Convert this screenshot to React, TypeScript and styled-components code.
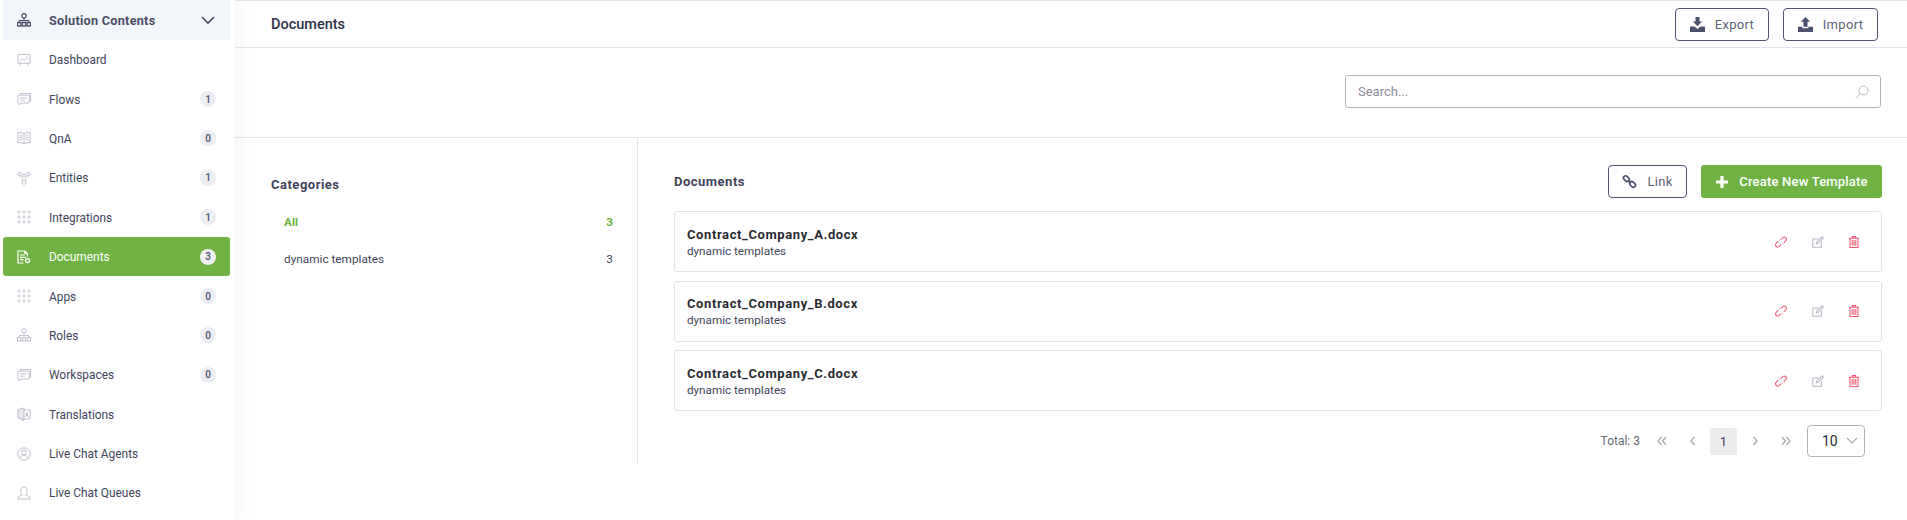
import React from "react";
import styled, { createGlobalStyle } from "styled-components";

const Global = createGlobalStyle`
  html, body { margin: 0; padding: 0; background: #fff; height: 100%; overflow: hidden; }
  body { font-family: Roboto, "Liberation Sans", sans-serif; color: #3f4259; }
`;

const Page = styled.div`
  display: flex;
  width: 1907px;
  height: 520px;
  overflow: hidden;
`;

const Sidebar = styled.aside`
  width: 235px;
  flex: none;
  padding-left: 3px;
  padding-right: 5px;
  box-sizing: border-box;
  background: #fff;
  box-shadow: 0 0 22px rgba(40, 40, 70, 0.07);
  position: relative;
  z-index: 1;
`;

const SideHeader = styled.div`
  height: 40px;
  display: flex;
  align-items: center;
  background: #f2f5f9;
  padding: 0 15px 0 14px;
  color: #4a4d68;
  font-size: 12.7px;
  font-weight: 700;
  letter-spacing: 0.25px;
`;

const SideItem = styled.div<{ $active?: boolean }>`
  height: 39.4px;
  display: flex;
  align-items: center;
  padding: 0 14px;
  border-radius: 3px;
  font-size: 11.9px;
  color: ${(p) => (p.$active ? "#fff" : "#42455c")};
  background: ${(p) => (p.$active ? "#70b244" : "transparent")};
  box-sizing: border-box;
`;

const IconSlot = styled.span<{ $tone?: string }>`
  width: 14px;
  height: 14px;
  flex: none;
  margin-right: 18px;
  display: flex;
  color: ${(p) => p.$tone || "#b9bbc9"};
  svg { width: 14px; height: 14px; display: block; }
`;

const Label = styled.span`
  flex: 1;
  padding-top: 1px;
`;

const Badge = styled.span<{ $active?: boolean }>`
  width: 16px;
  height: 16px;
  border-radius: 50%;
  display: flex;
  align-items: center;
  justify-content: center;
  font-size: 10px;
  font-weight: 500;
  color: #4a4d68;
  background: ${(p) => (p.$active ? "#f1f1f5" : "#ecedf3")};
`;

const Chevron = styled.svg`
  width: 14px;
  height: 9px;
  margin-left: auto;
  color: #4a4d68;
`;

const Main = styled.main`
  flex: 1;
  min-width: 0;
  border-top: 1px solid #e2e3ec;
`;

const TopBar = styled.div`
  height: 46px;
  display: flex;
  align-items: center;
  padding: 0 29px 0 36px;
  border-bottom: 1px solid #e2e3ec;
`;

const PageTitle = styled.h1`
  margin: 0 auto 0 0;
  font-size: 14.5px;
  font-weight: 500;
  color: #2d3047;
`;

const OutlineButton = styled.button<{ $width: number }>`
  width: ${(p) => p.$width}px;
  height: 33px;
  display: flex;
  align-items: center;
  justify-content: center;
  gap: 10px;
  padding: 0;
  background: #fff;
  border: 1px solid #50546f;
  border-radius: 4px;
  color: #5b5f79;
  font: 400 13px Roboto, sans-serif;
  letter-spacing: 0.3px;
  svg { width: 15px; height: 15px; color: #4d5170; }
`;

const ExportGap = styled.span`
  width: 14px;
`;

const SearchRow = styled.div`
  height: 62px;
  padding-top: 27px;
  display: flex;
  align-items: flex-start;
  justify-content: flex-end;
  padding-right: 26px;
  border-bottom: 1px solid #e2e3ec;
`;

const SearchBox = styled.div`
  width: 536px;
  height: 33px;
  box-sizing: border-box;
  display: flex;
  align-items: center;
  justify-content: space-between;
  padding: 0 11px 0 12px;
  border: 1px solid #b5b5b9;
  border-radius: 3px;
  font-size: 13px;
  color: #8a8c98;
  svg { width: 14px; height: 14px; color: #b8bcc8; }
`;

const Columns = styled.div`
  display: flex;
`;

const CategoryPane = styled.section`
  width: 403px;
  height: 326px;
  box-sizing: border-box;
  flex: none;
  padding: 39px 24px 0 36px;
  border-right: 1px solid #e2e3ec;
`;

const SectionTitle = styled.h2`
  margin: 0;
  font-size: 13px;
  font-weight: 700;
  letter-spacing: 0.5px;
  color: #3f4259;
  line-height: 16px;
`;

const CategoryList = styled.div`
  margin-top: 10px;
  padding-left: 13px;
`;

const CategoryRow = styled.div<{ $active?: boolean }>`
  height: 37.5px;
  display: flex;
  align-items: center;
  justify-content: space-between;
  font-size: 11.8px;
  font-weight: ${(p) => (p.$active ? 700 : 400)};
  color: ${(p) => (p.$active ? "#70b244" : "#42455c")};
`;

const DocPane = styled.section`
  flex: 1;
  min-width: 0;
  padding: 27px 25px 0 36px;
`;

const DocHeader = styled.div`
  height: 33px;
  display: flex;
  align-items: center;
  gap: 14px;
  margin-bottom: 13px;
  h2 { margin-right: auto; }
`;

const CreateButton = styled.button`
  width: 181px;
  height: 33px;
  display: flex;
  align-items: center;
  justify-content: center;
  gap: 10px;
  padding: 0;
  border: 0;
  border-radius: 3px;
  background: #70b244;
  color: #fff;
  font: 500 13px Roboto, sans-serif;
  letter-spacing: 0.2px;
  svg { width: 14px; height: 14px; }
`;

const Card = styled.article`
  height: 61px;
  box-sizing: border-box;
  display: flex;
  align-items: center;
  justify-content: space-between;
  padding: 0 21px 0 12px;
  margin-bottom: 8.5px;
  border: 1px solid #e0e1ea;
  border-radius: 3px;
`;

const CardText = styled.div`
  padding-top: 1px;
`;

const CardName = styled.div`
  font-size: 13px;
  font-weight: 700;
  letter-spacing: 0.6px;
  color: #2b2b33;
  line-height: 17px;
`;

const CardSub = styled.div`
  font-size: 11.7px;
  color: #42455c;
  line-height: 16px;
`;

const CardActions = styled.div`
  display: flex;
  gap: 24.5px;
  svg { width: 12px; height: 12px; display: block; }
`;

const Pagination = styled.div`
  height: 32px;
  margin-top: 14px;
  padding-right: 17px;
  display: flex;
  align-items: center;
  justify-content: flex-end;
  font-size: 12px;
  color: #66686f;
`;

const TotalLabel = styled.span`
  margin-right: 4px;
`;

const PageArrow = styled.span`
  width: 27px;
  margin-left: 4px;
  height: 27px;
  display: flex;
  align-items: center;
  justify-content: center;
  color: #a6a6a8;
  svg { width: 12px; height: 12px; }
`;

const PageCurrent = styled.span`
  width: 27px;
  height: 27px;
  margin-left: 4px;
  display: flex;
  align-items: center;
  justify-content: center;
  border-radius: 2px;
  background: #edeced;
  color: #4a3a5a;
  font-size: 13px;
`;

const PageSelect = styled.div`
  width: 58px;
  height: 32px;
  margin-left: 8px;
  box-sizing: border-box;
  display: flex;
  align-items: center;
  gap: 8px;
  padding-left: 14px;
  border: 1px solid #b5b5b9;
  border-radius: 4px;
  color: #2b2b33;
  font-size: 14px;
  svg { width: 12px; height: 8px; color: #a6a6ab; }
`;

const Svg = ({ children }: { children: React.ReactNode }) => (
  <svg viewBox="0 0 14 14" fill="none" stroke="currentColor" strokeWidth="0.9">{children}</svg>
);

const Hierarchy = ({ solid }: { solid?: boolean }) => (
  <Svg>
    <circle cx="7" cy="2.8" r="2.2" strokeWidth={solid ? 1.2 : 0.9} />
    <path d="M7 5V8M2.2 9.5V7.6h9.6v1.9" strokeWidth={solid ? 1.1 : 0.9} />
    {[0.5, 5.3, 10.1].map((x) => (
      <rect key={x} x={x} y="9.6" width="3.4" height="3.4" strokeWidth={solid ? 1.3 : 0.9} />
    ))}
  </Svg>
);

const BoardIcon = () => (
  <Svg>
    <path d="M1 1.5h12v8.7H1zM3.5 10.2l-1 2.5M10.5 10.2l1 2.5" />
    <path d="M3 8l2.5-2.2 2 1.2L11 3.8" />
  </Svg>
);
const ChatIcon = () => (
  <Svg>
    <path d="M3.5 3V1.5h10v7.5H12" />
    <path d="M1.8 3.2h9.5a1 1 0 0 1 1 1V10a1 1 0 0 1-1 1H4l-2 1.8V11a1.3 1.3 0 0 1-1.2-1.2V4.2a1 1 0 0 1 1-1z" />
    <path d="M3.2 6h6.5M3.2 8.2h4.5" />
  </Svg>
);
const BookIcon = () => (
  <Svg>
    <path d="M7 2.6C5.5 1.5 3 1.3.9 1.5v10.2c2-.2 4.6 0 6.1 1.2 1.5-1.2 4.1-1.4 6.1-1.2V1.5C11 1.3 8.5 1.5 7 2.6zM7 2.6v10.3" />
    <path d="M2.4 4.2h3M2.4 6.3h3M2.4 8.4h3M8.6 4.2h3M8.6 6.3h3M8.6 8.4h3" />
  </Svg>
);
const EntityIcon = () => (
  <Svg>
    <circle cx="2.5" cy="3" r="1.7" />
    <circle cx="11.5" cy="3" r="1.7" />
    <circle cx="7" cy="11.4" r="1.9" />
    <path d="M4.2 3h1.3M8.5 3h1.3M3.3 4.6L5.2 7.8v2M10.7 4.6L8.8 7.8v2" />
    <circle cx="7" cy="4.8" r="1.3" />
  </Svg>
);
const DotsIcon = () => (
  <Svg>
    {[2, 7, 12].flatMap((y) =>
      [2, 7, 12].map((x) => <circle key={`${x}-${y}`} cx={x} cy={y} r="1.1" strokeWidth="0.8" />)
    )}
  </Svg>
);
const DocIcon = () => (
  <Svg>
    <path d="M10.3 6.5V3.6L7.8 1H1v12h5.5" strokeWidth="1.2" />
    <path d="M7.6 1v2.6h2.7" strokeWidth="1" />
    <path d="M3 5h4.8M3 7.3h6M3 9.6h3.5" strokeWidth="1.2" />
    <circle cx="10.6" cy="10.6" r="2" strokeWidth="1.4" />
  </Svg>
);
const TranslateIcon = () => (
  <Svg>
    <path d="M1 2.5L7 1v11.5L1 11z" fill="currentColor" fillOpacity="0.35" />
    <path d="M7 3h6v9H7" />
    <path d="M8.6 10l1.4-4.6 1.4 4.6M9.2 8.6h1.6" />
    <path d="M4 12.5l3 1" />
  </Svg>
);
const AgentIcon = () => (
  <Svg>
    <circle cx="7" cy="7" r="6.1" />
    <circle cx="7" cy="5.6" r="2.4" />
    <path d="M2.8 11.2c.7-2 2.2-3 4.2-3s3.5 1 4.2 3" />
  </Svg>
);
const QueueIcon = () => (
  <Svg>
    <path d="M7 1.1c-2 0-3.3 1.4-3.3 3.4 0 1.5.6 2.5 1.3 3.2v1.5L1.5 10.5.8 13h12.4l-.7-2.5L9 9.2V7.7c.7-.7 1.3-1.7 1.3-3.2 0-2-1.3-3.4-3.3-3.4z" />
  </Svg>
);

const DownloadIcon = () => (
  <svg viewBox="0 0 15 15" fill="currentColor">
    <path d="M5.5 0h4v4.5h2.6L7.5 9.2 2.9 4.5h2.6z" />
    <path d="M0 9.5h4.5l3 2.6 3-2.6H15V15H0z" />
  </svg>
);
const UploadIcon = () => (
  <svg viewBox="0 0 15 15" fill="currentColor">
    <path d="M7.5 0l4.6 4.7H9.5v5h-4v-5H2.9z" />
    <path d="M0 9.8h4.5v1.4h6V9.8H15V15H0z" />
  </svg>
);
const SearchIcon = () => (
  <svg viewBox="0 0 14 14" fill="none" stroke="currentColor" strokeWidth="1">
    <circle cx="8.5" cy="5.5" r="4.5" />
    <path d="M5.2 8.8L.8 13.2" />
  </svg>
);
const LinkIcon = () => (
  <svg viewBox="0 0 15 15" fill="none" stroke="currentColor" strokeWidth="1.7">
    <rect x="1.2" y="2.6" width="6.4" height="4.2" rx="2.1" transform="rotate(45 4.4 4.7)" />
    <rect x="7.4" y="8.2" width="6.4" height="4.2" rx="2.1" transform="rotate(45 10.6 10.3)" />
    <path d="M6 6.2l3 3" />
  </svg>
);
const PlusIcon = () => (
  <svg viewBox="0 0 14 14" fill="currentColor">
    <path d="M5.4 1h3.2v4.4H13v3.2H8.6V13H5.4V8.6H1V5.4h4.4z" />
  </svg>
);
const UnlinkIcon = () => (
  <svg viewBox="0 0 12 12" fill="none" stroke="#f2556f" strokeWidth="1.05">
    <path d="M5.8 3.4l2.2-2a2.2 2.2 0 0 1 3 3.1L8.8 6.8" />
    <path d="M6.2 8.6l-2.2 2a2.2 2.2 0 0 1-3-3.1l2.2-2.3" />
    <path d="M4.4 3.6l.6.6M7 7.8l.6.6" />
  </svg>
);
const EditIcon = () => (
  <svg viewBox="0 0 12 12" fill="none" stroke="#b6b8c8" strokeWidth="1.05">
    <path d="M9.4 6v5.3H.8V3h6" />
    <path d="M4.4 7.7l.4-1.7L10 .8l1.3 1.3-5.2 5.2z" />
  </svg>
);
const TrashIcon = () => (
  <svg viewBox="0 0 12 12" fill="none" stroke="#f2556f" strokeWidth="1.05">
    <path d="M1 2.2h10M4.3 2V.6h3.4V2M2 2.2v9.2h8V2.2" />
    <path d="M4.2 4v5.8M6 4v5.8M7.8 4v5.8" />
  </svg>
);
const ArrowIcon = ({ d }: { d: string }) => (
  <svg viewBox="0 0 12 12" fill="none" stroke="currentColor" strokeWidth="1.2">
    <path d={d} />
  </svg>
);

const items: { label: string; icon: React.ReactNode; count?: number; active?: boolean }[] = [
  { label: "Dashboard", icon: <BoardIcon /> },
  { label: "Flows", icon: <ChatIcon />, count: 1 },
  { label: "QnA", icon: <BookIcon />, count: 0 },
  { label: "Entities", icon: <EntityIcon />, count: 1 },
  { label: "Integrations", icon: <DotsIcon />, count: 1 },
  { label: "Documents", icon: <DocIcon />, count: 3, active: true },
  { label: "Apps", icon: <DotsIcon />, count: 0 },
  { label: "Roles", icon: <Hierarchy />, count: 0 },
  { label: "Workspaces", icon: <ChatIcon />, count: 0 },
  { label: "Translations", icon: <TranslateIcon /> },
  { label: "Live Chat Agents", icon: <AgentIcon /> },
  { label: "Live Chat Queues", icon: <QueueIcon /> },
];

const docs = ["Contract_Company_A.docx", "Contract_Company_B.docx", "Contract_Company_C.docx"];

export default function App() {
  return (
    <Page>
      <Global />
      <Sidebar>
        <SideHeader>
          <IconSlot $tone="#4a4d68"><Hierarchy solid /></IconSlot>
          Solution Contents
          <Chevron viewBox="0 0 14 9" fill="none" stroke="currentColor" strokeWidth="1.6">
            <path d="M1 1l6 6 6-6" />
          </Chevron>
        </SideHeader>
        {items.map((it) => (
          <SideItem key={it.label} $active={it.active}>
            <IconSlot $tone={it.active ? "#fff" : undefined}>{it.icon}</IconSlot>
            <Label>{it.label}</Label>
            {it.count !== undefined && <Badge $active={it.active}>{it.count}</Badge>}
          </SideItem>
        ))}
      </Sidebar>
      <Main>
        <TopBar>
          <PageTitle>Documents</PageTitle>
          <OutlineButton $width={94}><DownloadIcon />Export</OutlineButton>
          <ExportGap />
          <OutlineButton $width={95}><UploadIcon />Import</OutlineButton>
        </TopBar>
        <SearchRow>
          <SearchBox>Search...<SearchIcon /></SearchBox>
        </SearchRow>
        <Columns>
          <CategoryPane>
            <SectionTitle>Categories</SectionTitle>
            <CategoryList>
              <CategoryRow $active><span>All</span><span>3</span></CategoryRow>
              <CategoryRow><span>dynamic templates</span><span>3</span></CategoryRow>
            </CategoryList>
          </CategoryPane>
          <DocPane>
            <DocHeader>
              <SectionTitle>Documents</SectionTitle>
              <OutlineButton $width={79}><LinkIcon />Link</OutlineButton>
              <CreateButton><PlusIcon />Create New Template</CreateButton>
            </DocHeader>
            {docs.map((d) => (
              <Card key={d}>
                <CardText>
                  <CardName>{d}</CardName>
                  <CardSub>dynamic templates</CardSub>
                </CardText>
                <CardActions>
                  <UnlinkIcon />
                  <EditIcon />
                  <TrashIcon />
                </CardActions>
              </Card>
            ))}
            <Pagination>
              <TotalLabel>Total: 3</TotalLabel>
              <PageArrow><ArrowIcon d="M5.5 2L2 6l3.5 4M10 2L6.5 6l3.5 4" /></PageArrow>
              <PageArrow><ArrowIcon d="M7.5 2L4 6l3.5 4" /></PageArrow>
              <PageCurrent>1</PageCurrent>
              <PageArrow><ArrowIcon d="M4.5 2L8 6l-3.5 4" /></PageArrow>
              <PageArrow><ArrowIcon d="M2 2l3.5 4L2 10M6.5 2L10 6l-3.5 4" /></PageArrow>
              <PageSelect>10
                <svg viewBox="0 0 12 8" fill="none" stroke="currentColor" strokeWidth="1.1"><path d="M1 1l5 5 5-5" /></svg>
              </PageSelect>
            </Pagination>
          </DocPane>
        </Columns>
      </Main>
    </Page>
  );
}
